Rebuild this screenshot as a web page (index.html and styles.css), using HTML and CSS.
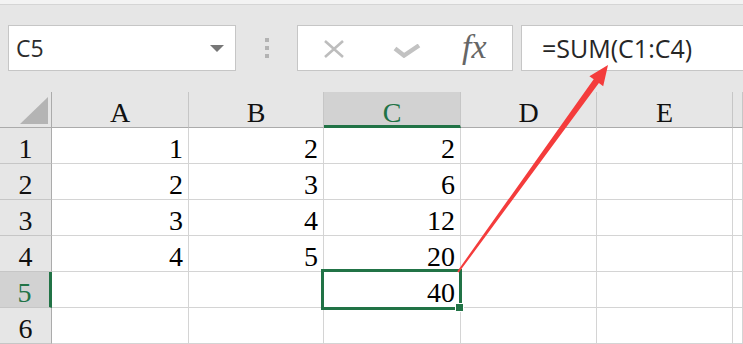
FILE: index.html
```html
<!DOCTYPE html>
<html lang="en">
<head>
  <meta charset="UTF-8">
  <title>SUM formula</title>
  <link rel="stylesheet" href="styles.css">
</head>
<body>

  <div class="ribbon-edge"></div>

  <!-- Name box + formula bar -->
  <div class="formula-bar">
    <div class="name-box">
      <span>C5</span>
      <svg class="caret" width="14" height="8" viewBox="0 0 14 8"><polygon points="0,0 14,0 7,7" fill="#777"/></svg>
    </div>
    <div class="grip"><i></i><i></i><i></i></div>
    <div class="fx-buttons">
      <svg class="btn-cancel" width="22" height="18" viewBox="0 0 22 18">
        <path d="M2 1 L20 17 M20 1 L2 17" stroke="#bdbdbd" stroke-width="2.6" fill="none"/>
      </svg>
      <svg class="btn-enter" width="28" height="14" viewBox="0 0 28 14">
        <polyline points="2,4.5 11,11.5 26,1.5" stroke="#c2c2c2" stroke-width="4.5" fill="none"/>
      </svg>
      <span class="fx">fx</span>
    </div>
    <div class="formula-input">=SUM(C1:C4)</div>
  </div>

  <!-- Grid -->
  <div class="sheet">
    <div class="corner"><div class="corner-tri"></div></div>
    <div class="col-head">A</div>
    <div class="col-head">B</div>
    <div class="col-head active">C</div>
    <div class="col-head">D</div>
    <div class="col-head">E</div>
    <div class="col-head"></div>

    <div class="row-head">1</div>
    <div class="cell">1</div><div class="cell">2</div><div class="cell">2</div>
    <div class="cell"></div><div class="cell"></div><div class="cell"></div>

    <div class="row-head">2</div>
    <div class="cell">2</div><div class="cell">3</div><div class="cell">6</div>
    <div class="cell"></div><div class="cell"></div><div class="cell"></div>

    <div class="row-head">3</div>
    <div class="cell">3</div><div class="cell">4</div><div class="cell">12</div>
    <div class="cell"></div><div class="cell"></div><div class="cell"></div>

    <div class="row-head">4</div>
    <div class="cell">4</div><div class="cell">5</div><div class="cell">20</div>
    <div class="cell"></div><div class="cell"></div><div class="cell"></div>

    <div class="row-head active">5</div>
    <div class="cell"></div><div class="cell"></div><div class="cell">40</div>
    <div class="cell"></div><div class="cell"></div><div class="cell"></div>

    <div class="row-head">6</div>
    <div class="cell"></div><div class="cell"></div><div class="cell"></div>
    <div class="cell"></div><div class="cell"></div><div class="cell"></div>

    <div class="selection"><span class="fill-handle"></span></div>
  </div>

  <!-- annotation arrow -->
  <svg class="arrow" width="743" height="344" viewBox="0 0 743 344">
    <polygon fill="#f43c3c"
      points="457.2,271.4 593.7,79.3 589.4,76.2 608,65 603.2,86.2 598.9,83.1 458.8,272.6"/>
  </svg>

</body>
</html>
```

FILE: styles.css
```css
body {
  margin: 0;
  background: #e6e6e6;
  width: 743px;
  height: 344px;
  overflow: hidden;
  position: relative;
}

.ribbon-edge {
  height: 4px;
  background: #f3f3f3;
  border-bottom: 1px solid #d5d5d5;
}

/* formula bar */
.formula-bar {
  display: flex;
  padding: 20px 0 21px 8px;
  height: 46px;
}

.name-box, .fx-buttons, .formula-input {
  box-sizing: border-box;
  height: 46px;
  background: #fff;
  border: 1px solid #c6c6c6;
  display: flex;
  align-items: center;
}

.name-box {
  width: 228px;
  padding: 0 11px 0 7px;
  justify-content: space-between;
  font: 23px "Open Sans", sans-serif;
  color: #2b2b2b;
}

.caret {
  margin-top: 2px;
}

.grip {
  width: 61px;
  display: flex;
  flex-direction: column;
  align-items: center;
  justify-content: center;
  gap: 4px;
}

.grip i {
  display: block;
  width: 4px;
  height: 4px;
  background: #b3b3b3;
}

.fx-buttons {
  width: 216px;
  padding-left: 25px;
}

.btn-cancel {
  margin-top: 1px;
}

.btn-enter {
  margin: 6px 0 0 48px;
}

.fx {
  margin-left: 41px;
  font: italic 34px "Liberation Serif", serif;
  color: #666;
  margin-top: -3px;
}

.formula-input {
  flex: 1;
  margin-left: 8px;
  border-right: none;
  padding-left: 20px;
  font: 25px "Open Sans", sans-serif;
  color: #262626;
}

/* sheet */
.sheet {
  position: relative;
  display: grid;
  grid-template-columns: 52px 137px 135px 137px 136px 136px 1fr;
  grid-auto-rows: 36px;
  font: 28px "Liberation Serif", serif;
  line-height: 31px;
}

.sheet > div {
  box-sizing: border-box;
  border-right: 1px solid #d4d4d4;
  border-bottom: 1px solid #d4d4d4;
  padding-top: 5px;
}

.cell {
  background: #fff;
  text-align: right;
  padding-right: 5px;
}

.corner {
  display: flex;
  justify-content: flex-end;
  align-items: flex-end;
  border-right-color: #ababab !important;
  border-bottom-color: #ababab !important;
}

.corner-tri {
  width: 28px;
  height: 27px;
  margin: 0 3px 3px 0;
  background: #b4b4b4;
  clip-path: polygon(100% 0, 0 100%, 100% 100%);
}

.col-head {
  text-align: center;
  color: #111;
  border-right-color: #c6c6c6 !important;
  border-bottom-color: #ababab !important;
}

.col-head.active {
  background: #d2d2d2;
  color: #217346;
  border-bottom: 3px solid #217346 !important;
}

.row-head {
  text-align: center;
  color: #111;
  border-right-color: #ababab !important;
  border-bottom-color: #c6c6c6 !important;
}

.row-head.active {
  background: #d2d2d2;
  color: #217346;
  border-right: 3px solid #217346 !important;
}

.selection {
  position: absolute;
  left: 321px;
  top: 177px;
  width: 141px;
  height: 41px;
  box-sizing: border-box;
  border: 3px solid #217346 !important;
  padding: 0 !important;
}

.fill-handle {
  position: absolute;
  right: -5px;
  bottom: -5px;
  width: 7px;
  height: 7px;
  background: #217346;
  border: 1px solid #fff;
}

.arrow {
  position: absolute;
  left: 0;
  top: 0;
  pointer-events: none;
}
```
